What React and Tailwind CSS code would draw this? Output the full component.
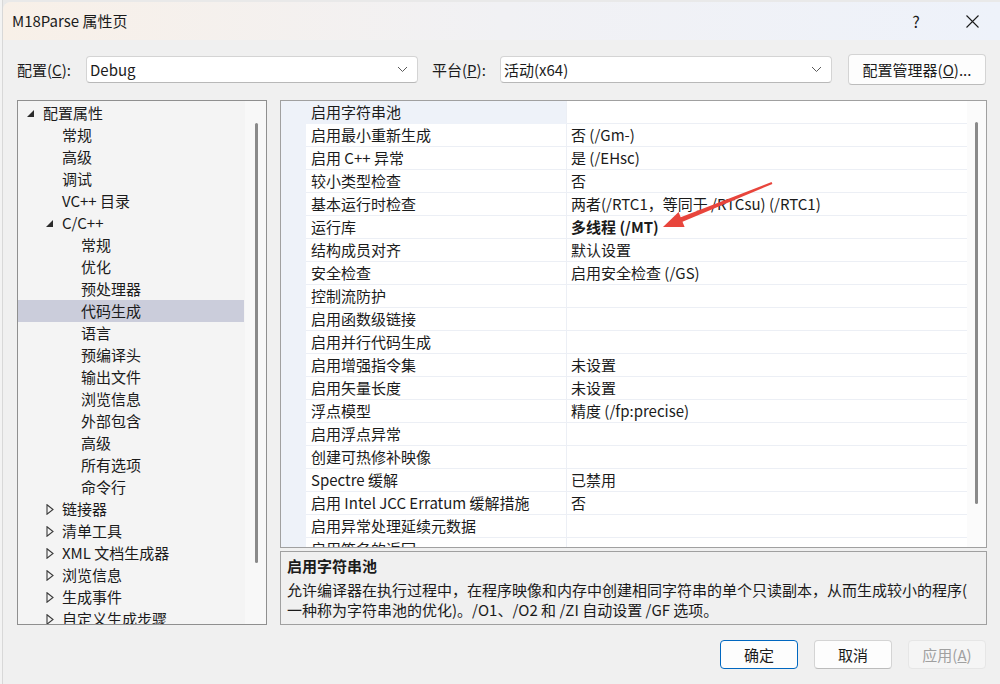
import React from "react";

const font = "font-['Noto_Sans_CJK_SC',sans-serif]";

const tree = [
  { label: "配置属性", level: 0, arrow: "open" },
  { label: "常规", level: 1 },
  { label: "高级", level: 1 },
  { label: "调试", level: 1 },
  { label: "VC++ 目录", level: 1 },
  { label: "C/C++", level: 1, arrow: "open" },
  { label: "常规", level: 2 },
  { label: "优化", level: 2 },
  { label: "预处理器", level: 2 },
  { label: "代码生成", level: 2, selected: true },
  { label: "语言", level: 2 },
  { label: "预编译头", level: 2 },
  { label: "输出文件", level: 2 },
  { label: "浏览信息", level: 2 },
  { label: "外部包含", level: 2 },
  { label: "高级", level: 2 },
  { label: "所有选项", level: 2 },
  { label: "命令行", level: 2 },
  { label: "链接器", level: 1, arrow: "closed" },
  { label: "清单工具", level: 1, arrow: "closed" },
  { label: "XML 文档生成器", level: 1, arrow: "closed" },
  { label: "浏览信息", level: 1, arrow: "closed" },
  { label: "生成事件", level: 1, arrow: "closed" },
  { label: "自定义生成步骤", level: 1, arrow: "closed" },
];

const props = [
  ["启用字符串池", ""],
  ["启用最小重新生成", "否 (/Gm-)"],
  ["启用 C++ 异常", "是 (/EHsc)"],
  ["较小类型检查", "否"],
  ["基本运行时检查", "两者(/RTC1，等同于 /RTCsu) (/RTC1)"],
  ["运行库", "多线程 (/MT)", true],
  ["结构成员对齐", "默认设置"],
  ["安全检查", "启用安全检查 (/GS)"],
  ["控制流防护", ""],
  ["启用函数级链接", ""],
  ["启用并行代码生成", ""],
  ["启用增强指令集", "未设置"],
  ["启用矢量长度", "未设置"],
  ["浮点模型", "精度 (/fp:precise)"],
  ["启用浮点异常", ""],
  ["创建可热修补映像", ""],
  ["Spectre 缓解", "已禁用"],
  ["启用 Intel JCC Erratum 缓解措施", "否"],
  ["启用异常处理延续元数据", ""],
  ["启用签名的返回", ""],
];

const indent = ["pl-[25px]", "pl-[44px]", "pl-[63px]"];
const arrowPos = ["left-[9px]", "left-[28px]", "left-[47px]"];

function Chevron() {
  return (
    <svg width="11" height="7" viewBox="0 0 11 7" className="shrink-0">
      <path d="M1 1 L5.5 5.5 L10 1" fill="none" stroke="#5a5a5a" strokeWidth="1" />
    </svg>
  );
}

function Combo({ value }) {
  return (
    <div className="w-[332px] h-[27px] bg-white border border-[#d4d4d4] border-b-[#b8b8b8] rounded-[4px] flex items-center pl-[3px] pr-[9px]">
      <span className="flex-1 text-[#1b1b1b]">{value}</span>
      <Chevron />
    </div>
  );
}

function TreeRow({ item }) {
  return (
    <div
      className={`relative h-[22px] flex items-center whitespace-nowrap ${indent[item.level]} ${
        item.selected ? "bg-[#cbcddb] mx-[1px] -ml-[0px]" : ""
      }`}
    >
      {item.arrow === "open" && (
        <svg width="8" height="8" viewBox="0 0 8 8" className={`absolute ${arrowPos[item.level]} top-[8px]`}>
          <polygon points="7,0 7,7 0,7" fill="#2b2b2b" />
        </svg>
      )}
      {item.arrow === "closed" && (
        <svg width="8" height="11" viewBox="0 0 8 11" className={`absolute ${arrowPos[item.level]} top-[6px]`}>
          <polygon points="1,0.8 7,5.5 1,10.2" fill="none" stroke="#3a3a3a" strokeWidth="1.1" />
        </svg>
      )}
      <span>{item.label}</span>
    </div>
  );
}

function PropRow({ row, index }) {
  const [name, value, bold] = row;
  const selected = index === 0;
  return (
    <div className="flex h-[23px]">
      <div className={`w-[261px] flex items-center pl-[5px] border-b border-r border-[#eceff5] whitespace-nowrap ${selected ? "bg-[#eef2f9] border-b-[#eef2f9]" : "bg-white"}`}>
        {name}
      </div>
      <div className={`flex-1 flex items-center pl-[4px] border-b border-[#eceff5] whitespace-nowrap ${bold ? "font-bold" : ""}`}>
        {value}
      </div>
    </div>
  );
}

export default function App() {
  return (
    <div className={`relative w-[1000px] h-[684px] overflow-hidden flex bg-[#e9e9e9] text-[15px] leading-[20px] text-[#1b1b1b] ${font}`}>
      <div className="w-[3px] bg-[#f3f3f3] border-r border-[#d8d8d8]" />
      <div className="flex-1 flex flex-col mt-[2px] rounded-tl-[8px] overflow-hidden bg-[#f0f0f0]">
        {/* title bar */}
        <div className="h-[38px] flex items-center bg-gradient-to-r from-[#f8f0e8] via-[#f1f1f4] to-[#eef2fa]">
          <span className="pl-[9px] flex-1">M18Parse 属性页</span>
          <div className="w-[56px] h-full flex items-center justify-center text-[16px]">?</div>
          <div className="w-[56px] h-full flex items-center justify-center">
            <svg width="13" height="13" viewBox="0 0 13 13">
              <path d="M0.5 0.5 L12.5 12.5 M12.5 0.5 L0.5 12.5" stroke="#1b1b1b" strokeWidth="1.1" />
            </svg>
          </div>
        </div>

        <div className="flex-1 flex flex-col pl-[14px] pr-[13px]">
          {/* config row */}
          <div className="mt-[14px] h-[31px] flex items-center">
            <span className="w-[69px]">
              配置(<u>C</u>):
            </span>
            <Combo value="Debug" />
            <span className="ml-[14px] w-[68px]">
              平台(<u>P</u>):
            </span>
            <Combo value="活动(x64)" />
            <button className="ml-[16px] w-[138px] h-[31px] bg-[#fdfdfd] border border-[#d4d4d4] border-b-[#bcbcbc] rounded-[4px] text-[#1b1b1b]">
              配置管理器(<u>O</u>)...
            </button>
          </div>

          {/* main */}
          <div className="mt-[15px] h-[525px] flex gap-[13px]">
            {/* tree */}
            <div className="w-[250px] h-full border border-[#8f8f8f] bg-[#f4f4f4] flex overflow-hidden">
              <div className="w-[227px] pt-[1px]">
                {tree.map((item, i) => (
                  <TreeRow key={i} item={item} />
                ))}
              </div>
              <div className="flex-1 bg-[#f8f8f8] flex justify-center pl-[2px]">
                <div className="mt-[22px] w-[3px] h-[440px] rounded-full bg-[#8a8a8a]" />
              </div>
            </div>

            {/* right */}
            <div className="flex-1 flex flex-col gap-[3px]">
              <div className="h-[448px] border border-[#a0a0a0] bg-white flex overflow-hidden">
                <div className="w-[25px] bg-[#eef2f9]" />
                <div className="w-[661px] h-full overflow-hidden">
                  {props.map((row, i) => (
                    <PropRow key={i} row={row} index={i} />
                  ))}
                </div>
                <div className="flex-1 bg-[#fbfbfb] flex justify-center">
                  <div className="mt-[21px] w-[3px] h-[382px] rounded-full bg-[#8a8a8a]" />
                </div>
              </div>
              <div className="flex-1 border border-[#a0a0a0] bg-[#f0f0f0] pl-[6px] pt-[3px]">
                <div className="font-bold leading-[22px]">启用字符串池</div>
                <div className="whitespace-nowrap leading-[20px] mt-[3px]">
                  允许编译器在执行过程中，在程序映像和内存中创建相同字符串的单个只读副本，从而生成较小的程序(
                  <br />
                  一种称为字符串池的优化)。/O1、/O2 和 /ZI 自动设置 /GF 选项。
                </div>
              </div>
            </div>
          </div>

          {/* buttons */}
          <div className="mt-[15px] flex justify-end gap-[16px] pr-[1px]">
            <button className="w-[78px] h-[29px] rounded-[4px] bg-[#fdfdfd] border border-[#0067c0]">确定</button>
            <button className="w-[78px] h-[29px] rounded-[4px] bg-[#fdfdfd] border border-[#d4d4d4] border-b-[#bcbcbc]">取消</button>
            <button className="w-[78px] h-[29px] rounded-[4px] bg-[#f5f5f5] border border-[#e6e6e6] text-[#a0a0a0]">
              应用(<u>A</u>)
            </button>
          </div>
        </div>
      </div>

      {/* annotation arrow */}
      <svg className="absolute left-0 top-0 pointer-events-none" width="1000" height="684" viewBox="0 0 1000 684">
        <polygon
          points="663,227 684.6,226.9 682.5,221.8 772.4,183.9 771.6,182.1 680.7,217.2 678.6,212.1"
          fill="#e8453c"
        />
      </svg>
    </div>
  );
}
